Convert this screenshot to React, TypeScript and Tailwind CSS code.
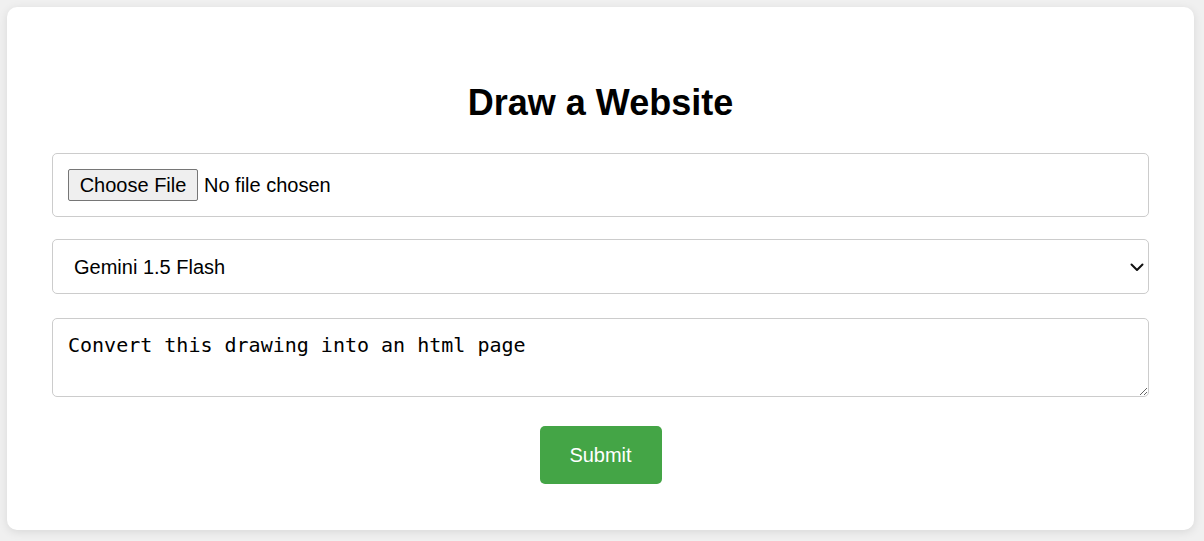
export default function App() {
  const sans = "font-['Liberation_Sans',Arial,sans-serif]";

  return (
    <div className={`min-h-screen bg-[#f0f0f0] pt-[7px] pl-[7px] pb-[11px] ${sans}`}>
      <div className="w-[1187px] h-[523px] bg-white rounded-[10px] shadow-[0_2px_10px_rgba(0,0,0,0.1)] px-[45px] pt-[45px] flex flex-col">
        <h1 className="text-[36px] font-bold text-black text-center leading-[41px] mt-[30px] mb-[30px]">
          Draw a Website
        </h1>

        <div className="h-[64px] border border-[#cccccc] rounded-[5px] px-[15px] flex items-center">
          <input
            type="file"
            className="text-[20px] text-black font-['Liberation_Sans',Arial,sans-serif] file:text-[20px] file:font-['Liberation_Sans',Arial,sans-serif] file:bg-[#efefef] file:border file:border-solid file:border-[#767676] file:rounded-[2px] file:h-[32px] file:w-[130px] file:mr-[6px] file:text-black"
          />
        </div>

        <div className="relative mt-[22px]">
          <select className="w-full h-[55px] border border-[#cccccc] rounded-[5px] pl-[21px] pr-[40px] text-[20px] text-black bg-white appearance-none outline-none font-['Liberation_Sans',Arial,sans-serif]">
            <option>Gemini 1.5 Flash</option>
            <option>Gemini 1.5 Pro</option>
          </select>
          <svg
            className="absolute right-[5px] top-[24px] pointer-events-none"
            width="14"
            height="9"
            viewBox="0 0 14 9"
            fill="none"
          >
            <path d="M1.5 1.5 L7 7 L12.5 1.5" stroke="#111" strokeWidth="2" strokeLinecap="round" strokeLinejoin="round" />
          </svg>
        </div>

        <textarea
          defaultValue="Convert this drawing into an html page"
          className="mt-[24px] h-[79px] w-full border border-[#cccccc] rounded-[5px] p-[15px] text-[20px] leading-[23px] text-black font-['DejaVu_Sans_Mono',Menlo,monospace] outline-none"
        />

        <div className="mt-[29px] flex justify-center">
          <button className="w-[122px] h-[58px] bg-[#44a546] text-white text-[20px] rounded-[5px]">
            Submit
          </button>
        </div>
      </div>
    </div>
  );
}
